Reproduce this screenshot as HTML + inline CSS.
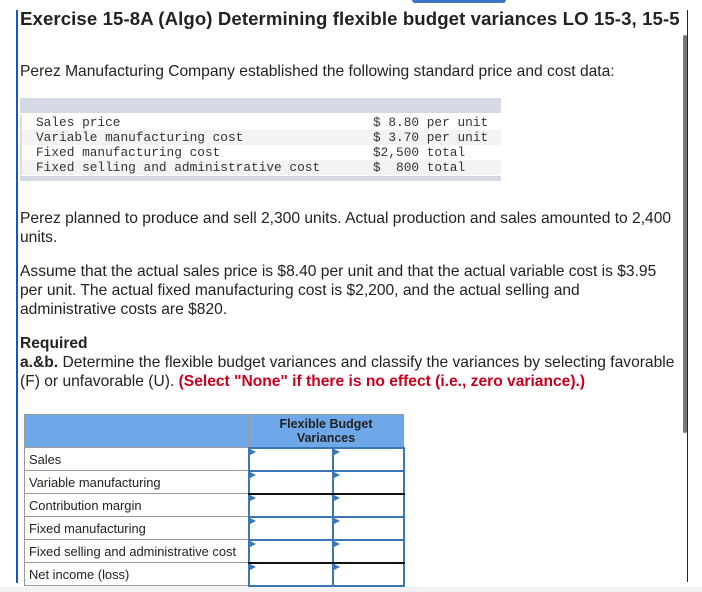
<!DOCTYPE html>
<html><head><style>
body{margin:0;width:702px;height:592px;background:#fff;position:relative;overflow:hidden;font-family:"Liberation Sans",sans-serif;color:#222}
.a{position:absolute;white-space:nowrap}
p{margin:0}
.t{font-size:15.6px;line-height:19px}
.mono{font-family:"Liberation Mono",monospace;font-size:12.8px;color:#333}
table{border-collapse:collapse;table-layout:fixed;position:absolute;left:24px;top:414px;font-size:12.9px}
td{height:21px;padding:0 4px;border:1px solid #999;box-sizing:border-box}
tr{height:23px}
.in{border:2px solid #3a76b8;position:relative;padding:0}
.in:before{content:"";position:absolute;left:0;top:0;border-left:6px solid #3a76b8;border-top:3px solid transparent;border-bottom:3px solid transparent}
</style></head><body>
<div class="a" style="left:412px;top:0;width:94px;height:3px;background:#3a76c4;border-radius:0 0 3px 3px"></div>
<div class="a" style="left:16px;top:10px;width:2px;height:573px;background:#1a55c8"></div>
<div class="a" style="left:683px;top:35px;width:4px;height:398px;background:#777;border-radius:2px"></div>
<div class="a" style="left:687px;top:10px;width:1px;height:572px;background:#222"></div>
<div class="a" style="left:20px;top:8px;font-size:18.6px;font-weight:bold;letter-spacing:0.1px">Exercise 15-8A (Algo) Determining flexible budget variances LO 15-3, 15-5</div>
<div class="a t" style="left:20px;top:62px">Perez Manufacturing Company established the following standard price and cost data:</div>
<div class="a" style="left:20px;top:98px;width:481px;height:15px;background:#d5d9e3"></div>
<div class="a" style="left:20px;top:176px;width:481px;height:5px;background:#d5d9e3"></div>
<div class="a" style="left:20px;top:130px;width:481px;height:15px;background:#f3f3f3"></div>
<div class="a" style="left:20px;top:160px;width:481px;height:15px;background:#f3f3f3"></div>
<div class="a" style="left:20px;top:115px;width:2px;height:60px;background:#ddd"></div>
<div class="a mono" style="left:36px;top:115px;line-height:15px">Sales price<br>Variable manufacturing cost<br>Fixed manufacturing cost<br>Fixed selling and administrative cost</div>
<div class="a mono" style="left:373px;top:115px;line-height:15px">$ 8.80 per unit<br>$ 3.70 per unit<br>$2,500 total<br>$&nbsp; 800 total</div>
<div class="a t" style="left:20px;top:209px;width:668px;white-space:normal">Perez planned to produce and sell 2,300 units. Actual production and sales amounted to 2,400 units.</div>
<div class="a t" style="left:20px;top:262px;width:655px;white-space:normal">Assume that the actual sales price is $8.40 per unit and that the actual variable cost is $3.95 per unit. The actual fixed manufacturing cost is $2,200, and the actual selling and administrative costs are $820.</div>
<div class="a t" style="left:20px;top:334px;width:670px;white-space:normal"><b>Required</b><br><b>a.&amp;b.</b> Determine the flexible budget variances and classify the variances by selecting favorable (F) or unfavorable (U). <b style="color:#c8001e">(Select "None" if there is no effect (i.e., zero variance).)</b></div>
<table style="width:379px">
<colgroup><col style="width:224px"><col style="width:84px"><col style="width:71px"></colgroup>
<tr style="background:#6fa8e8;height:33px"><td></td><td colspan="2" style="text-align:center;font-weight:bold;font-size:12.5px;line-height:14px">Flexible Budget<br>Variances</td></tr>
<tr><td>Sales</td><td class="in"></td><td class="in"></td></tr>
<tr><td>Variable manufacturing</td><td class="in" style="border-bottom-color:#111"></td><td class="in" style="border-bottom-color:#111"></td></tr>
<tr><td>Contribution margin</td><td class="in"></td><td class="in"></td></tr>
<tr><td>Fixed manufacturing</td><td class="in"></td><td class="in"></td></tr>
<tr><td>Fixed selling and administrative cost</td><td class="in" style="border-bottom-color:#111"></td><td class="in" style="border-bottom-color:#111"></td></tr>
<tr><td>Net income (loss)</td><td class="in"></td><td class="in"></td></tr>
</table>
<div class="a" style="left:0;top:587px;width:702px;height:5px;background:#f2f2f4"></div>
</body></html>
